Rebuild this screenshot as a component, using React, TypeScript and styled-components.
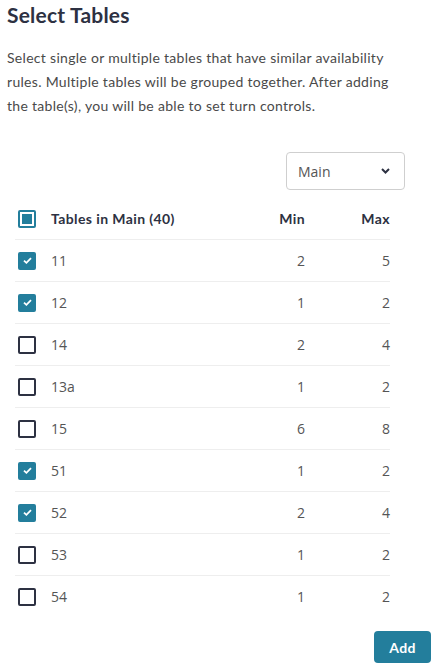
import React, { useState } from "react"
import styled, { createGlobalStyle } from "styled-components"

const GlobalStyle = createGlobalStyle`
  body {
    margin: 0;
    background: #fff;
    font-family: Lato, "Noto Sans", sans-serif;
    color: #2d3142;
  }
`

const Page = styled.div`
  padding: 3px 7px 0;
  display: flex;
  flex-direction: column;
`

const Title = styled.h2`
  margin: 0;
  font-size: 21px;
  line-height: 24px;
  font-weight: 700;
  letter-spacing: 0.2px;
  color: #2d3142;
`

const Description = styled.p`
  margin: 19px 0 0;
  font-size: 14px;
  line-height: 24px;
  letter-spacing: 0.3px;
  color: #4a4a4a;
  max-width: 395px;
`

const FilterBar = styled.div`
  display: flex;
  justify-content: flex-end;
  margin: 34px 27px 0 0;
`

const Select = styled.button`
  width: 119px;
  height: 38px;
  padding: 0 14px 0 11px;
  display: flex;
  align-items: center;
  justify-content: space-between;
  background: #fff;
  border: 1px solid #cfcfcf;
  border-radius: 4px;
  font-family: "Open Sans", sans-serif;
  font-size: 14px;
  color: #555;
  cursor: pointer;
`

const Table = styled.div`
  margin: 8px 0 0 8px;
  width: 375px;
`

const Row = styled.div<{ $header?: boolean }>`
  display: grid;
  grid-template-columns: 1fr 80px 85px;
  align-items: center;
  height: 41px;
  border-bottom: 1px solid #eeeeee;
  &:last-child {
    border-bottom: none;
  }
  font-family: ${(p) => (p.$header ? `Lato, sans-serif` : `"Open Sans", sans-serif`)};
  font-weight: ${(p) => (p.$header ? 700 : 400)};
  letter-spacing: ${(p) => (p.$header ? "0.4px" : "0")};
  font-size: 14px;
  color: ${(p) => (p.$header ? "#2d3142" : "#555")};
`

const NameCell = styled.label`
  display: flex;
  align-items: center;
  gap: 15px;
  padding-left: 3px;
  cursor: pointer;
`

const NumCell = styled.div`
  text-align: right;
`

const Box = styled.span<{ $state: "on" | "off" | "some" }>`
  width: 18px;
  height: 18px;
  box-sizing: border-box;
  border-radius: 2px;
  display: flex;
  align-items: center;
  justify-content: center;
  flex-shrink: 0;
  background: ${(p) => (p.$state === "on" ? "#237e9c" : "#fff")};
  border: 2px solid ${(p) => (p.$state === "off" ? "#2d3142" : "#237e9c")};
`

const Partial = styled.span`
  width: 10px;
  height: 10px;
  background: #237e9c;
`

const Footer = styled.div`
  display: flex;
  justify-content: flex-end;
  margin: 14px 1px 0 0;
`

const AddButton = styled.button`
  width: 57px;
  height: 32px;
  border: none;
  border-radius: 4px;
  background: #237e9c;
  color: #fff;
  font-family: Lato, sans-serif;
  font-weight: 700;
  font-size: 14px;
  letter-spacing: 0.3px;
  cursor: pointer;
`

type TableRow = { name: string; min: number; max: number; checked: boolean }

const initialRows: TableRow[] = [
  { name: "11", min: 2, max: 5, checked: true },
  { name: "12", min: 1, max: 2, checked: true },
  { name: "14", min: 2, max: 4, checked: false },
  { name: "13a", min: 1, max: 2, checked: false },
  { name: "15", min: 6, max: 8, checked: false },
  { name: "51", min: 1, max: 2, checked: true },
  { name: "52", min: 2, max: 4, checked: true },
  { name: "53", min: 1, max: 2, checked: false },
  { name: "54", min: 1, max: 2, checked: false },
]

const Checkbox: React.FC<{ state: "on" | "off" | "some" }> = ({ state }) => (
  <Box $state={state}>
    {state === "on" && (
      <svg width="9" height="7" viewBox="0 0 9 7">
        <path d="M1 3.6 L3.4 5.8 L8 1.2" fill="none" stroke="#fff" strokeWidth="1.8" />
      </svg>
    )}
    {state === "some" && <Partial />}
  </Box>
)

const App: React.FC = () => {
  const [rows, setRows] = useState(initialRows)
  const count = rows.filter((r) => r.checked).length
  const allState = count === 0 ? "off" : count === rows.length ? "on" : "some"

  const toggle = (i: number) =>
    setRows((rs) => rs.map((r, j) => (j === i ? { ...r, checked: !r.checked } : r)))

  return (
    <Page>
      <GlobalStyle />
      <Title>Select Tables</Title>
      <Description>
        Select single or multiple tables that have similar availability rules. Multiple tables will
        be grouped together. After adding the table(s), you will be able to set turn controls.
      </Description>
      <FilterBar>
        <Select>
          Main
          <svg width="9" height="6" viewBox="0 0 9 6">
            <path d="M1 1 L4.5 4.5 L8 1" fill="none" stroke="#2d3142" strokeWidth="2" />
          </svg>
        </Select>
      </FilterBar>
      <Table>
        <Row $header>
          <NameCell>
            <Checkbox state={allState} />
            Tables in Main (40)
          </NameCell>
          <NumCell>Min</NumCell>
          <NumCell>Max</NumCell>
        </Row>
        {rows.map((r, i) => (
          <Row key={r.name}>
            <NameCell onClick={() => toggle(i)}>
              <Checkbox state={r.checked ? "on" : "off"} />
              {r.name}
            </NameCell>
            <NumCell>{r.min}</NumCell>
            <NumCell>{r.max}</NumCell>
          </Row>
        ))}
      </Table>
      <Footer>
        <AddButton>Add</AddButton>
      </Footer>
    </Page>
  )
}

export default App
